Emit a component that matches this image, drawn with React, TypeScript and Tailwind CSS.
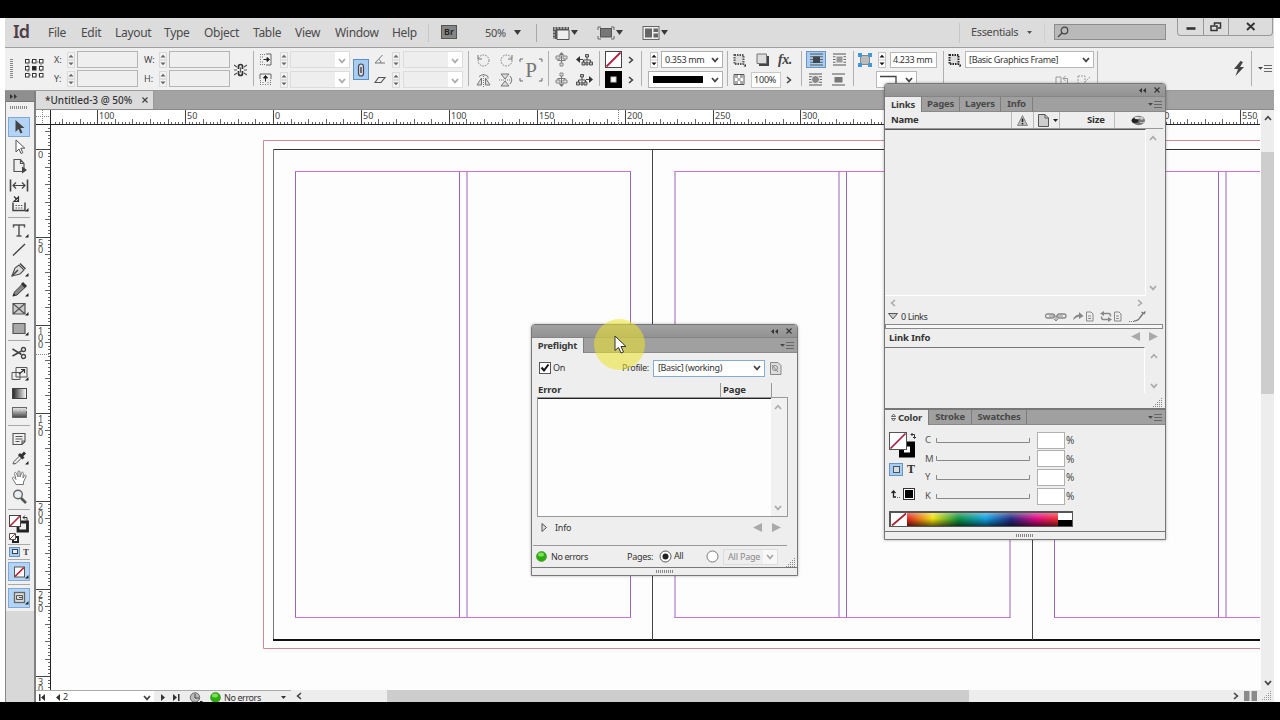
import React from 'react';

type Kids = { children?: React.ReactNode };

interface SvgProps {
  w: number;
  h: number;
  className?: string;
  children?: React.ReactNode;
}

const Svg = ({ w, h, className = '', children }: SvgProps) => (
  <svg width={w} height={h} viewBox={`0 0 ${w} ${h}`} fill="none" className={`block shrink-0 ${className}`}>
    {children}
  </svg>
);

/* ---------- small shared pieces ---------- */

const Chevron = ({ color = '#444' }: { color?: string }) => (
  <Svg w={8} h={6}><path d="M1 1l3 3.4L7 1" stroke={color} strokeWidth="1.7" /></Svg>
);

const ChevronUp = ({ color = '#aaa' }: { color?: string }) => (
  <Svg w={8} h={6}><path d="M1 5l3-3.4L7 5" stroke={color} strokeWidth="1.6" /></Svg>
);

const ChevronRight = ({ color = '#444' }: { color?: string }) => (
  <Svg w={6} h={8}><path d="M1 1l3.4 3L1 7" stroke={color} strokeWidth="1.6" /></Svg>
);

const ChevronLeft = ({ color = '#444' }: { color?: string }) => (
  <Svg w={6} h={8}><path d="M5 1L1.6 4 5 7" stroke={color} strokeWidth="1.6" /></Svg>
);

const Caret = () => <Svg w={7} h={5}><path d="M0 0h7L3.500 5z" fill="#3a3a3a" /></Svg>;

const Spinner = ({ dark = false }: { dark?: boolean }) => (
  <div className={`w-[8px] h-[16px] shrink-0 border ${dark ? 'bg-white border-[#c4c4c4]' : 'bg-[#f2f2f2] border-[#dadada]'}`}>
    <Svg w={6} h={14}>
      <path d="M0.500 4.500h5L3 1.800zM0.500 9.500h5L3 12.200z" fill={dark ? '#111' : '#666'} />
      <path d="M0 7h6" stroke="#ccc" />
    </Svg>
  </div>
);

const Sep = () => <div className="w-px h-[35px] mt-[3px] bg-[#b0b0b0] shrink-0" />;

// stacks the two rows of the control bar
const Pair = ({ w, children }: { w: string } & Kids) => (
  <div className={`flex flex-col gap-[3px] pt-[3px] shrink-0 ${w}`}>{children}</div>
);

const Row = ({ children, className = '' }: { className?: string } & Kids) => (
  <div className={`flex items-center h-[17px] ${className}`}>{children}</div>
);

const Field = () => <div className="w-[61px] h-[17px] border border-[#b5b5b5] bg-[#efefef]" />;

const DimSelect = () => (
  <div className="w-[60px] h-[17px] border border-[#dcdcdc] bg-[#eeeeee] flex justify-end">
    <div className="w-[14px] h-full bg-white flex items-center justify-center pt-[2px]"><Chevron color="#aaa" /></div>
  </div>
);

const NoneSwatch = ({ size }: { size: number }) => (
  <Svg w={size} h={size}>
    <rect x="0.500" y="0.500" width={size - 1} height={size - 1} fill="#fff" stroke="#444" />
    <path d={`M1.500 ${size - 1.5}L${size - 1.5} 1.500`} stroke="#b02040" strokeWidth="1.8" />
  </Svg>
);

const PanelMenu = () => (
  <Svg w={15} h={9}>
    <path d="M0 3h5L2.500 5.800z" fill="#444" />
    <path d="M6 1.500h8M6 4.500h8M6 7.500h8" stroke="#666" strokeWidth="1" />
  </Svg>
);

const GreenDot = () => (
  <Svg w={11} h={11}>
    <circle cx="5.500" cy="5.500" r="5" fill="#2cae0a" stroke="#4a8a3a" strokeWidth="0.600" />
    <ellipse cx="5" cy="3.500" rx="3" ry="2" fill="#7be05a" />
  </Svg>
);

/* ---------- menu bar ---------- */

const menus = [
  { name: 'File', w: 'w-[33px]' },
  { name: 'Edit', w: 'w-[34px]' },
  { name: 'Layout', w: 'w-[49px]' },
  { name: 'Type', w: 'w-[40px]' },
  { name: 'Object', w: 'w-[49px]' },
  { name: 'Table', w: 'w-[42px]' },
  { name: 'View', w: 'w-[40px]' },
  { name: 'Window', w: 'w-[57px]' },
  { name: 'Help', w: 'w-[36px]' },
];

const MenuBar = () => (
  <div className="h-[29px] bg-[#dcdcdc] flex items-center text-[#4a4a4a] shrink-0">
    <div className="w-[43px] pl-[8px] text-[18px] leading-[24px] font-semibold tracking-[-1px] text-[#503f4a] pb-[3px]">Id</div>
    <div className="flex text-[12px] leading-[16px] tracking-[-0.3px]">
      {menus.map((m) => <div key={m.name} className={m.w}>{m.name}</div>)}
    </div>
    <div className="w-px h-[18px] bg-[#c6c6c6]" />
    <div className="ml-[12px] w-[16px] h-[14px] mb-[2px] bg-[#858585] border border-[#555] text-[9px] leading-[12px] text-center font-semibold text-[#222]">Br</div>
    <div className="ml-[28px] w-[29px] text-[11px] leading-[14px] tracking-[-0.3px]">50%</div>
    <Caret />
    <div className="ml-[15px] w-px h-[18px] bg-[#a8a8a8]" />
    <div className="ml-[15px] flex items-center gap-[1px] w-[45px]">
      <Svg w={18} h={14}>
        <path d="M1 1h16v3H1zM1 4h4v9H1z" fill="#555" />
        <path d="M3 1v3M6 1v2M9 1v2M12 1v2M15 1v2M1 6h2M1 9h2M1 12h2" stroke="#ddd" />
        <path d="M5 4h12v9.500H5z" stroke="#555" fill="#eee" />
      </Svg>
      <Caret />
    </div>
    <div className="flex items-center gap-[1px] w-[45px]">
      <Svg w={18} h={14}>
        <rect x="3.500" y="2.500" width="11" height="8.500" fill="#777" stroke="#555" />
        <path d="M1 4V1h3M14 1h3v3M17 10v3h-3M4 13H1v-3" stroke="#666" />
      </Svg>
      <Caret />
    </div>
    <div className="flex items-center gap-[1px]">
      <Svg w={18} h={14}>
        <rect x="1" y="0.500" width="16" height="13" fill="#eee" stroke="#666" />
        <path d="M3 2.500h7v9H3zM11.500 2.500H16v3.500h-4.500zM11.500 7.500H16v4h-4.500z" fill="#666" />
      </Svg>
      <Caret />
    </div>
    <div className="flex-1" />
    <div className="w-px h-[20px] bg-[#c6c6c6]" />
    <div className="ml-[11px] w-[56px] text-[11px] leading-[14px] tracking-[-0.35px] pb-[2px]">Essentials</div>
    <Svg w={5} h={3}><path d="M0 0h5L2.500 3z" fill="#555" /></Svg>
    <div className="ml-[12px] w-px h-[20px] bg-[#d0d0d0]" />
    <div className="ml-[9px] mb-[2px] w-[112px] h-[16px] bg-[#b9b9b9] border border-[#8c8c8c] flex items-center pl-[2px]">
      <Svg w={12} h={12}>
        <circle cx="7.500" cy="4.500" r="3.300" stroke="#444" strokeWidth="1.200" />
        <path d="M5 7L1 11" stroke="#444" strokeWidth="1.300" />
      </Svg>
    </div>
    <div className="ml-[11px] flex self-start w-[96px] h-[18px] border border-t-0 border-[#999] rounded-b-[4px] mr-px">
      <div className="w-[26px] flex items-center justify-center border-r border-[#999]">
        <Svg w={10} h={8}><path d="M0.500 5.500h9" stroke="#333" strokeWidth="2.600" /></Svg>
      </div>
      <div className="w-[25px] flex items-center justify-center border-r border-[#999]">
        <Svg w={12} h={10}><path d="M4.500 3V1h6v5H8M1 4h6v4.500H1z" stroke="#333" strokeWidth="1.500" /></Svg>
      </div>
      <div className="flex-1 flex items-center justify-center">
        <Svg w={10} h={9}><path d="M1 1l7.500 7M8.500 1L1 8" stroke="#333" strokeWidth="1.900" /></Svg>
      </div>
    </div>
  </div>
);

/* ---------- control bar ---------- */

const ScaleIcon = ({ flip = false }: { flip?: boolean }) => (
  <Svg w={13} h={13}>
    <g transform={flip ? 'rotate(-90 6.5 6.5)' : ''}>
      <path d="M1 1.500h6M1 11.500h6M1 4h3M1 6.500h2M1 9h3" stroke="#777" strokeDasharray="1 1" />
      <path d="M7 1h5v11H7" stroke="#666" />
      <path d="M4.500 6.500h5M8 4.500l2.500 2L8 8.500z" stroke="#222" fill="#222" />
    </g>
  </Svg>
);

const TreeIcon = ({ up = false }: { up?: boolean }) => (
  <Svg w={13} h={15}>
    <g transform={up ? 'rotate(180 6.5 7.5)' : ''}>
      <path d="M6.500 15l-3-3.500h6z" fill="#777" />
      <path d="M6.500 11V2M3 6.500h7M3 6v3M10 6v3" stroke="#777" />
      <path d="M1 8h4v3H1zM8 8h4v3H8zM5 1h3v3H5z" stroke="#888" fill="#ddd" />
    </g>
  </Svg>
);

const SideTree = ({ right = false }: { right?: boolean }) => (
  <Svg w={17} h={13}>
    <g transform={right ? 'translate(17 0) scale(-1 1)' : ''}>
      <path d="M0 6.500l4-3.500v7z" fill="#333" />
      <path d="M4 6.500h3M11 3v4M7.500 10V7h7v3" stroke="#444" />
      <path d="M9.500 1.500h3v2.500h-3zM6 9h3v3H6zM10 9h2v3h-2zM13.500 9h3v3h-3z" stroke="#444" fill="#bbb" strokeWidth="0.900" />
    </g>
  </Svg>
);

const WrapIcon = ({ kind }: { kind: string }) => (
  <Svg w={13} h={13}>
    <path d="M0 1h13M0 12h13" stroke="#555" strokeWidth="1.100" />
    {kind !== 'jump' && <path d="M0 3.800h13M0 6.500h13M0 9.200h13" stroke="#666" strokeWidth="1.100" />}
    {kind === 'none' && <rect x="3" y="3.500" width="7" height="6.500" fill="#3e4650" />}
    {kind === 'box' && <rect x="3" y="3" width="7" height="7" fill="#999" stroke="#f0f0f0" />}
    {kind === 'shape' && <circle cx="6.500" cy="6.500" r="4" fill="#888" stroke="#f0f0f0" />}
    {kind === 'jump' && <rect x="2.500" y="4" width="8" height="5.500" fill="#777" />}
  </Svg>
);

const DashBox = ({ color = '#555' }: { color?: string }) => (
  <Svg w={13} h={14}>
    <rect x="1.500" y="2" width="9" height="9" stroke={color} strokeWidth="2" strokeDasharray="1.500 1" fill="#ddd" />
    <path d="M10.500 13.500h2.500V11z" fill="#222" />
  </Svg>
);

const ControlBar = () => (
  <div className="h-[43px] bg-[#f0f0f0] border-t border-[#a0a0a0] flex text-[9px] text-[#444] shrink-0">
    <div className="w-[20px] pl-[5px] pt-[11px] shrink-0">
      <Svg w={3} h={19}><path d="M1.500 0v19" stroke="#888" strokeWidth="3" strokeDasharray="1 1" /></Svg>
    </div>
    <div className="w-[29px] pt-[11px] shrink-0">
      <Svg w={19} h={19}>
        <path d="M3 3h13v13H3z" stroke="#666" strokeDasharray="1.500 1.500" />
        {[0.5, 7.5, 14.5].map((x) => [0.5, 7.5, 14.5].map((y) => (
          <rect key={`${x}-${y}`} x={x} y={y} width="3.500" height="3.500" fill={x === 7.5 && y === 7.5 ? '#222' : '#fff'} stroke="#333" />
        )))}
      </Svg>
    </div>
    <Pair w="w-[90px]">
      <Row><span className="w-[13px]">X:</span><Spinner /><i className="w-[2px]" /><Field /></Row>
      <Row className="mt-[-1px]"><span className="w-[13px]">Y:</span><Spinner /><i className="w-[2px]" /><Field /></Row>
    </Pair>
    <Pair w="w-[90px]">
      <Row><span className="w-[15px]">W:</span><Spinner /><i className="w-[2px]" /><Field /></Row>
      <Row className="mt-[-1px]"><span className="w-[15px]">H:</span><Spinner /><i className="w-[2px]" /><Field /></Row>
    </Pair>
    <div className="w-[19px] pt-[15px] shrink-0">
      <Svg w={13} h={14}>
        <path d="M4.500 6V3.500a2 2 0 014 0V6M4.500 8v2.500a2 2 0 004 0V8" stroke="#333" strokeWidth="1.700" />
        <path d="M6.500 4.500v5" stroke="#555" strokeWidth="1.200" />
        <path d="M0 2l3 2M0 7h3M0 12l3-2M13 2l-3 2M13 7h-3M13 12l-3-2" stroke="#555" strokeWidth="1.200" />
      </Svg>
    </div>
    <Sep />
    <Pair w="w-[99px] pl-[5px]">
      <Row><ScaleIcon /><i className="w-[8px]" /><Spinner /><i className="w-[2px]" /><DimSelect /></Row>
      <Row><ScaleIcon flip /><i className="w-[8px]" /><Spinner /><i className="w-[2px]" /><DimSelect /></Row>
    </Pair>
    <div className="w-[16px] h-[21px] mt-[11px] bg-[#a8cdf2] border border-[#5f8fc0] flex items-center justify-center shrink-0">
      <Svg w={8} h={14}>
        <rect x="1.500" y="1" width="5" height="12" rx="2.500" stroke="#445" strokeWidth="1.200" fill="#ddd" />
        <path d="M4 4v6" stroke="#334" strokeWidth="1.300" />
      </Svg>
    </div>
    <Pair w="w-[99px] pl-[5px]">
      <Row><Svg w={12} h={11}><path d="M8.500 1L1 9h10M5 5.500q2 1 2 3.500" stroke="#777" /></Svg><i className="w-[6px]" /><Spinner /><i className="w-[3px]" /><DimSelect /></Row>
      <Row><Svg w={12} h={11}><path d="M4.500 3.500H11L7 8.500H1z" stroke="#555" strokeWidth="1.200" /></Svg><i className="w-[6px]" /><Spinner /><i className="w-[3px]" /><DimSelect /></Row>
    </Pair>
    <Sep />
    <Pair w="w-[48px] pl-[7px]">
      <Row className="gap-[8px]">
        <Svg w={15} h={14}><circle cx="7.500" cy="7.500" r="5.500" stroke="#777" strokeDasharray="1.500 1.200" /><path d="M2 2v4h4" stroke="#777" /></Svg>
        <Svg w={15} h={14}><circle cx="7.500" cy="7.500" r="5.500" stroke="#777" strokeDasharray="1.500 1.200" /><path d="M13 2v4H9" stroke="#777" /></Svg>
      </Row>
      <Row className="gap-[8px]">
        <Svg w={15} h={14}><path d="M1 12L5.500 5v7zM14 12L9.500 5v7z" stroke="#777" fill="#ddd" /><path d="M7.500 1v13" stroke="#777" strokeDasharray="1 1" /><path d="M3 3.500q4.500-3.500 9 0v2" stroke="#777" /></Svg>
        <Svg w={15} h={14}><path d="M2 1h8L6 6zM2 13h8L6 8z" stroke="#777" fill="#ddd" /><path d="M0 7h12" stroke="#777" strokeDasharray="1 1" /><path d="M11 3q3.500 4 0 8" stroke="#777" /></Svg>
      </Row>
    </Pair>
    <div className="w-[31px] pl-[2px] pt-[10px] shrink-0">
      <div className="relative w-[24px] h-[24px] font-['Liberation_Serif',serif] text-[21px] leading-[24px] text-center text-[#777]">
        P
        <Svg w={24} h={24} className="absolute inset-0"><path d="M1 4V1h3M20 1h3v3M23 20v3h-3M4 23H1v-3" stroke="#666" /></Svg>
      </div>
    </div>
    <Sep />
    <Pair w="w-[50px] pl-[6px]">
      <Row className="gap-[8px]"><TreeIcon up /><SideTree /></Row>
      <Row className="gap-[8px]"><TreeIcon /><SideTree right /></Row>
    </Pair>
    <Sep />
    <Pair w="w-[41px] pl-[5px]">
      <Row className="gap-[6px]"><NoneSwatch size={17} /><ChevronRight /></Row>
      <Row className="gap-[6px]">
        <Svg w={17} h={17}><path d="M0 0h17v17H0z" fill="#000" /><rect x="6" y="6" width="5" height="5" fill="#fff" stroke="#ccc" /></Svg>
        <ChevronRight />
      </Row>
    </Pair>
    <Sep />
    <Pair w="w-[85px] pl-[6px]">
      <Row>
        <i className="w-[2px]" /><Spinner dark />
        <div className="ml-[3px] w-[62px] h-[17px] bg-white border border-[#b0b0b0] flex items-center justify-between pl-[3px] pr-[3px] text-[#333] tracking-[-0.35px] whitespace-nowrap">0.353 mm<Chevron /></div>
      </Row>
      <Row>
        <div className="w-[75px] h-[17px] bg-white border border-[#b0b0b0] flex items-center justify-between pl-[4px] pr-[3px]">
          <div className="w-[50px] h-[7px] bg-black" /><Chevron />
        </div>
      </Row>
    </Pair>
    <Sep />
    <Pair w="w-[73px] pl-[5px]">
      <Row>
        <DashBox />
        <Svg w={14} h={14} className="ml-[10px]"><path d="M3 3h10v10H3z" fill="#444" /><path d="M1 1h9.500v9.500H1z" fill="#ddd" stroke="#777" /></Svg>
        <span className="ml-[8px] font-['Liberation_Serif',serif] italic font-bold text-[14px] leading-[15px] tracking-[-0.5px]">fx.</span>
      </Row>
      <Row>
        <Svg w={12} h={13}><path d="M1 1.500h10v10H1z" stroke="#555" fill="#fff" /><path d="M2 2h3v3H2zM7 2h3v3H7zM4.500 5h3v3h-3zM2 8h3v3H2zM7 8h3v3H7z" fill="#aaa" /></Svg>
        <div className="ml-[6px] w-[30px] h-[16px] bg-white border border-[#c8c8c8] text-[#333] pl-[2px] leading-[14px] tracking-[-0.2px]">100%</div>
        <i className="w-[5px]" /><ChevronRight />
      </Row>
    </Pair>
    <Sep />
    <Pair w="w-[51px] pl-[4px]">
      <Row className="gap-[7px]">
        <div className="w-[20px] h-[17px] bg-[#a8cdf2] border border-[#6a95c2] flex items-center justify-center"><WrapIcon kind="none" /></div>
        <WrapIcon kind="box" />
      </Row>
      <Row className="gap-[10px] pl-[3px]"><WrapIcon kind="shape" /><WrapIcon kind="jump" /></Row>
    </Pair>
    <Sep />
    <Pair w="w-[89px] pl-[4px]">
      <Row>
        <Svg w={14} h={14}>
          <path d="M2.500 2.500h9v9h-9z" fill="#bbb" stroke="#888" />
          <path d="M0 0h4v4H0zM10 0h4v4h-4zM0 10h4v4H0zM10 10h4v4h-4z" fill="#3b9bd8" />
        </Svg>
        <i className="w-[6px]" /><Spinner dark />
        <div className="ml-[4px] w-[47px] h-[16px] bg-white border border-[#b8b8b8] pl-[2px] leading-[14px] text-[#333] tracking-[-0.35px] whitespace-nowrap">4.233 mm</div>
      </Row>
      <Row>
        <div className="ml-[18px] w-[41px] h-[17px] bg-white border border-[#b8b8b8] flex items-center justify-between pl-[3px] pr-[3px]">
          <Svg w={17} h={10}><path d="M0 1.500h16V10" stroke="#444" strokeWidth="1.300" /></Svg><Chevron />
        </div>
      </Row>
    </Pair>
    <Sep />
    <Pair w="w-[153px] pl-[4px]">
      <Row>
        <DashBox color="#222" />
        <div className="ml-[4px] w-[129px] h-[17px] bg-white border border-[#b8b8b8] flex items-center justify-between pl-[3px] pr-[3px] text-[#333] tracking-[-0.33px]">[Basic Graphics Frame]<Chevron /></div>
      </Row>
      <Row className="pl-[107px] gap-[8px]">
        <Svg w={14} h={12}><path d="M1 3h5v8H1zM8 4.500h4.500V9M10.500 2L8 4.500l2.500 2.500" stroke="#999" /></Svg>
        <Svg w={14} h={12}><path d="M1 2h7v9H1zM13 3L8 8" stroke="#999" strokeDasharray="2 1" /></Svg>
      </Row>
    </Pair>
    <Sep />
    <div className="flex-1" />
    <Svg w={12} h={15} className="mt-[13px]"><path d="M7.500 0L1 8h4l-2.500 7L11 6H7l3-5z" fill="#444" /></Svg>
    <div className="w-[6px]" />
    <Sep />
    <div className="w-[22px] pl-[6px] pt-[16px] shrink-0"><PanelMenu /></div>
  </div>
);

/* ---------- toolbox ---------- */

const Corner = () => <path d="M17 16.500h3.500V13z" fill="#222" />;

const Tool = ({ children, active = false, more = false }: { active?: boolean; more?: boolean } & Kids) => (
  <div className={`w-[22px] h-[19.6px] shrink-0 ${active ? 'bg-[#b3d4f5] outline outline-1 -outline-offset-1 outline-[#7fa9d6]' : ''}`}>
    <Svg w={22} h={19}>{children}{more && <Corner />}</Svg>
  </div>
);

const ToolSep = () => <div className="w-[22px] h-[5.9px] pt-[2px] shrink-0"><div className="h-px bg-[#a8a8a8]" /></div>;

const Toolbox = () => (
  <div className="w-[29px] bg-[#d8d8d8] border-l border-[#888] shrink-0 flex flex-col">
    <div className="h-[11px] bg-[#8f8f8f] border-b border-[#777] pl-[4px] pt-[3px] shrink-0">
      <Svg w={8} h={5}><path d="M0 0l3 2.500L0 5zM4 0l3 2.500L4 5z" fill="#333" /></Svg>
    </div>
    <div className="h-[509px] bg-[#f0f0f0] flex flex-col pl-[2px] shrink-0">
      <div className="h-[15px] pt-[4px] pl-[2px] shrink-0">
        <Svg w={18} h={3}><path d="M0 1.500h18" stroke="#888" strokeWidth="3" strokeDasharray="1 1" /></Svg>
      </div>
      <Tool active><path d="M7.500 3v12l3-3 2 4.500 2-1-2-4.500h4z" fill="#444" /></Tool>
      <Tool><path d="M8 3v12l3-3 2 4.500 1.800-.8-2-4.500h4z" stroke="#555" fill="#fff" /></Tool>
      <Tool><path d="M6 3.500h6.500l3.500 4V15.500H6zM12.500 3.500v4H16" stroke="#555" strokeWidth="1.200" fill="#eee" /><path d="M14 10.500v7l5-3.500z" fill="#444" /></Tool>
      <Tool><path d="M2.500 3.500v12M19.500 3.500v12" stroke="#444" strokeWidth="1.600" /><path d="M5 9.500h12M8 6.500l-3 3 3 3M14 6.500l3 3-3 3" stroke="#444" strokeWidth="1.200" /></Tool>
      <Tool more><path d="M5 7.500v8h12v-8" stroke="#444" strokeWidth="1.500" /><path d="M7.500 13h7M7.500 10.500h7" stroke="#555" strokeWidth="1.200" strokeDasharray="1.500 1.200" /><path d="M6 1.500l4 4M10.500 2v4.500H6z" stroke="#333" strokeWidth="1.200" /></Tool>
      <ToolSep />
      <Tool more><path d="M5.500 6.500V4h11v2.500M11 4v11M8.500 15h5" stroke="#555" strokeWidth="1.500" /></Tool>
      <Tool><path d="M5 15.500L17 4" stroke="#444" strokeWidth="1.400" /></Tool>
      <Tool more><path d="M4 16l3-8 4-3 5 5-4 4z" stroke="#555" fill="#ddd" strokeWidth="1.200" /><path d="M4 16l6-6M12 3.500l5.500 5.500" stroke="#444" strokeWidth="1.500" /></Tool>
      <Tool more><path d="M5 16l1.500-4L14 4.500l3 3L9 15z" stroke="#444" fill="#888" /><path d="M14 3l4 4" stroke="#333" strokeWidth="3" /><path d="M4.500 16.500l3-1.500-1.500-1.500z" fill="#222" /></Tool>
      <Tool more><path d="M5 4.500h12v10.500H5zM5 4.500L17 15M17 4.500L5 15" stroke="#555" strokeWidth="1.200" fill="#ccc" /></Tool>
      <Tool more><path d="M5 4.500h12v10H5z" stroke="#555" fill="#a8a8a8" strokeWidth="1.200" /></Tool>
      <ToolSep />
      <Tool><path d="M4.500 5l9 5.500M4.500 12l9-5" stroke="#444" strokeWidth="1.600" /><circle cx="15.500" cy="5.500" r="2" stroke="#444" strokeWidth="1.300" /><circle cx="15.500" cy="12.500" r="2" stroke="#444" strokeWidth="1.300" /></Tool>
      <Tool more><path d="M4 8.500h8v7H4zM8 3.500h11V13H8z" stroke="#555" /><path d="M11 10l5-4M13 5.500h3.500V9" stroke="#333" strokeWidth="1.200" /></Tool>
      <Tool>
        <defs><linearGradient id="grad"><stop stopColor="#222" /><stop offset="1" stopColor="#fff" /></linearGradient></defs>
        <rect x="4.500" y="4.500" width="14" height="10" fill="url(#grad)" stroke="#444" />
      </Tool>
      <Tool>
        <defs><linearGradient id="feather" x2="0" y2="1"><stop stopColor="#eee" /><stop offset="1" stopColor="#444" /></linearGradient></defs>
        <rect x="4.500" y="4.500" width="14" height="10" fill="url(#feather)" stroke="#666" />
        <path d="M5 7h14" stroke="#ccc" strokeDasharray="2 2" strokeWidth="2" />
      </Tool>
      <ToolSep />
      <Tool><path d="M5 4.500h12v8l-3 3H5zM7.500 7.500h7M7.500 10h7M7.500 12.500h4M17 12h-3v3.500" stroke="#555" strokeWidth="1.100" /></Tool>
      <Tool more><path d="M5 16l1-2.500 6-6 2 2-6 6z" stroke="#555" fill="#eee" /><path d="M11 6l4.500 4.500M13.500 8L17 4.500" stroke="#333" strokeWidth="3" /></Tool>
      <Tool><path d="M8 16.500L4.500 10.500c-.5-1.500 1-2 2-.5L8 11.500 6.500 5.500c0-1.500 1.500-1.500 2 0L10 9V4c0-1.500 2-1.500 2 0v5l1.500-4c.5-1.500 2-1 1.800.5L15 10l1.500-2.500c1-1 2 0 1.500 1L15.500 14v2.500z" stroke="#777" fill="#fff" /></Tool>
      <Tool><circle cx="10" cy="7.500" r="4.300" stroke="#666" strokeWidth="1.400" fill="#e8f0f2" /><path d="M13 11l5 5" stroke="#555" strokeWidth="2.600" /></Tool>
      <ToolSep />
      <Svg w={22} h={31}>
        <path d="M12 9h7.500v9H10v-5" stroke="#222" strokeWidth="2.800" fill="#eee" />
        <rect x="1.500" y="2.500" width="11" height="11" fill="#fff" stroke="#444" /><path d="M2 13L12 3" stroke="#b03040" strokeWidth="1.700" />
        <path d="M15 4.500h4v3.500M17 2.500l-2 2 2 2" stroke="#333" />
        <path d="M5 24h5v5H5z" fill="#fff" stroke="#222" strokeWidth="2" /><path d="M1.500 20.500h6v6h-6z" fill="#fff" stroke="#555" /><path d="M2 26l5-5" stroke="#b03040" />
      </Svg>
      <div className="w-[22px] h-px bg-[#a8a8a8] shrink-0" />
      <div className="w-[22px] h-[14px] flex items-center pl-px shrink-0">
        <div className="w-[11px] h-[10px] bg-[#a8cdf2] border border-[#6a95c2] flex items-center justify-center"><div className="w-[6px] h-[5px] bg-[#eee] border border-[#345]" /></div>
        <span className="ml-[3px] font-['Liberation_Serif',serif] text-[9px] leading-[10px] font-bold text-[#444]">T</span>
      </div>
      <div className="w-[22px] h-px bg-[#a8a8a8] shrink-0 mb-[2px]" />
      <Tool active more><rect x="6.500" y="5" width="10" height="10" fill="#fff" stroke="#555" /><path d="M7 14.500L16 5.500" stroke="#c02030" strokeWidth="1.700" /></Tool>
      <div className="w-[22px] h-px bg-[#a8a8a8] shrink-0 my-[3px]" />
      <Tool active more><rect x="6.500" y="4.500" width="10" height="10" fill="#ddd" stroke="#666" strokeWidth="1.300" /><path d="M8.500 7.500h6v4h-6zM11 9.500h3" stroke="#555" /></Tool>
    </div>
  </div>
);

/* ---------- rulers and page spread ---------- */

const PX_PER_MM = 1.758;

const HRuler = () => {
  const ticks = [];
  for (let mm = -124; mm <= 560; mm += 2) {
    const x = Math.round(222 + mm * PX_PER_MM) + 0.5;
    if (x < 1 || x > 1208) continue;
    const major = mm % 50 === 0;
    const h = major ? 15 : mm % 10 === 0 ? 6 : 3;
    ticks.push(<path key={mm} d={`M${x} ${15 - h}v${h}`} stroke={major ? '#444' : '#666'} />);
    if (major) ticks.push(<text key={`t${mm}`} x={x + 1.5} y="8.500" fontSize="9" fill="#444">{Math.abs(mm)}</text>);
  }
  return <Svg w={1209} h={15}>{ticks}<path d="M0 14.500h1209" stroke="#222" /><path d="M567.500 0v15" stroke="#888" strokeDasharray="1 1" /></Svg>;
};

const VRuler = () => {
  const ticks = [];
  for (let mm = -12; mm <= 306; mm += 2) {
    const y = Math.round(24 + mm * PX_PER_MM) + 0.5;
    if (y < 0 || y > 564) continue;
    const major = mm % 50 === 0;
    const w = major ? 15 : mm % 10 === 0 ? 6 : 3;
    ticks.push(<path key={mm} d={`M${15 - w} ${y}h${w}`} stroke={major ? '#444' : '#666'} />);
    if (major) {
      String(mm).split('').forEach((d, i) => {
        ticks.push(<text key={`${mm}-${i}`} x="2" y={y + 8 + i * 7} fontSize="9" fill="#444">{d}</text>);
      });
    }
  }
  return <Svg w={15} h={565}>{ticks}<path d="M14.500 0v565" stroke="#222" /><path d="M0 229.500h15" stroke="#888" strokeDasharray="1 1" /></Svg>;
};

const pageLefts = [222, 601.5, 981];

const Spread = () => (
  <Svg w={1209} h={565}>
    <path d="M1209 15.500H212.500V523.500H1209" stroke="#cc8a99" />
    <path d="M1209 24.500H222.500" stroke="#333" />
    <path d="M222.500 24v491" stroke="#777" />
    <path d="M222 515h987" stroke="#111" strokeWidth="2" />
    <path d="M601.500 24v491M981.500 24v491" stroke="#444" />
    {pageLefts.map((x) => (
      <g key={x}>
        <path d={`M${x + 22.5} 46v447M${x + 186.5} 46v447M${x + 194} 46v447M${x + 357.5} 46v447`} stroke="#9a63bd" />
        <path d={`M${x + 22} 46.500h336`} stroke="#cf72d4" />
        <path d={`M${x + 22} 492.500h336`} stroke="#cf72d4" />
      </g>
    ))}
  </Svg>
);

const StatusBar = () => (
  <div className="h-[12px] flex items-center bg-[#ededed] text-[9px] text-[#333] shrink-0">
    <div className="w-[118px] h-full bg-white flex items-center border-t border-[#aaa] pt-[2px] pl-[3px]">
      <Svg w={22} h={7}><path d="M0 0h1.500v7H0zM6 0v7L2 3.500zM21 0v7l-4-3.500z" fill="#333" /></Svg>
      <span className="ml-[2px] leading-[9px] mt-[-3px]">2</span>
      <i className="flex-1" /><Chevron /><i className="w-[3px]" />
    </div>
    <div className="w-[137px] h-full border-t border-[#aaa] flex items-center pt-[2px] pl-[7px]">
      <Svg w={19} h={7}><path d="M0 0v7l4-3.500zM12 0v7l4-3.500zM17 0h1.500v7H17z" fill="#333" /></Svg>
      <Svg w={14} h={11} className="ml-[9px]"><circle cx="6" cy="5.500" r="4.700" fill="#bbb" stroke="#666" /><path d="M6 2v4h4" stroke="#444" /><path d="M11 9h2.500v2H11z" fill="#222" /></Svg>
      <i className="w-[7px]" /><GreenDot />
      <span className="ml-[3px] leading-[9px] tracking-[-0.4px] whitespace-nowrap">No errors</span>
      <i className="flex-1" /><Svg w={5} h={3}><path d="M0 0h5L2.500 3z" fill="#333" /></Svg><i className="w-[5px]" />
    </div>
    <i className="w-[5px]" /><ChevronLeft />
    <div className="ml-[85px] w-[582px] h-full bg-[#cdcdcd]" />
    <i className="flex-1" />
    <ChevronRight />
    <Svg w={14} h={10} className="ml-[5px]"><path d="M0 0h5.500v10H0zM7.500 0H13v10H7.500z" fill="#8a8a8a" /></Svg>
    <Svg w={11} h={10} className="ml-[3px] mr-[2px]"><path d="M9.500 0v10M7.500 2v8M5.500 4v6M3.500 6v4M1.500 8v2" stroke="#999" strokeDasharray="1 1" /></Svg>
  </div>
);

const Document = () => (
  <div className="w-[1238px] flex flex-col shrink-0">
    <div className="h-[19px] bg-[#a3a3a3] border-b border-[#8a8a8a] flex shrink-0">
      <div className="w-[118px] bg-[#dcdcdc] border-r border-[#999] flex items-center pl-[9px] text-[10px] font-medium text-[#333]">
        <span className="w-[97px] whitespace-nowrap">*Untitled-3 @ 50%</span>
        <Svg w={6} h={6}><path d="M0.500 0.500l5 5M5.500 0.500l-5 5" stroke="#444" strokeWidth="1.200" /></Svg>
      </div>
    </div>
    <div className="flex flex-1">
      <div className="w-[1225px]">
        <div className="flex bg-white">
          <Svg w={15} h={15}><path d="M6.500 0v15M0 6.500h15" stroke="#888" strokeDasharray="1 1" /><path d="M14.500 0v15M0 14.500h15" stroke="#222" /></Svg>
          <HRuler />
        </div>
        <div className="flex bg-[#fdfdfd]"><VRuler /><Spread /></div>
      </div>
      <div className="w-[13px] bg-[#ededed] flex flex-col items-center pt-[5px]">
        <ChevronUp color="#444" />
        <div className="mt-[31px] w-full h-[242px] bg-[#cdcdcd]" />
        <i className="flex-1" />
        <Chevron /><i className="h-[4px]" />
      </div>
    </div>
    <StatusBar />
  </div>
);

/* ---------- floating panels ---------- */

const PanelTitle = () => (
  <div className="h-[13px] shrink-0 bg-linear-to-b from-[#a2a2a2] to-[#929292] border-b border-[#858585] rounded-t-[3px] flex items-center justify-end pr-[5px]">
    <Svg w={7} h={5}><path d="M3 0v5L0 2.500zM7 0v5L4 2.500z" fill="#333" /></Svg>
    <Svg w={6} h={6} className="ml-[8px]"><path d="M0.500 0.500l5 5M5.500 0.500l-5 5" stroke="#333" strokeWidth="1.100" /></Svg>
  </div>
);

interface Tab { label: string; w: string; }

const TabRow = ({ tabs, icon = false }: { tabs: Tab[]; icon?: boolean }) => (
  <div className="h-[15px] bg-[#a0a0a0] flex text-[9.500px] leading-[14px] font-bold tracking-[-0.2px] shrink-0">
    {tabs.map((t, i) => (
      <div key={t.label} className={`${t.w} flex items-center justify-center gap-[2px] border-r border-[#7d7d7d] ${i === 0 ? 'bg-[#ededed] text-[#3a3a3a]' : 'text-[#484848] border-b border-b-[#8a8a8a]'}`}>
        {icon && i === 0 && <Svg w={5} h={9}><path d="M0.500 3.500l2-2.500 2 2.500zM0.500 5.500l2 2.500 2-2.500z" stroke="#444" strokeWidth="0.800" /></Svg>}
        {t.label}
      </div>
    ))}
    <div className="flex-1 flex items-center justify-end pr-[2px] border-b border-[#8a8a8a]"><PanelMenu /></div>
  </div>
);

const PanelGrip = () => (
  <div className="h-[8px] shrink-0 border-t border-[#777] flex items-center justify-center">
    <Svg w={18} h={3}><path d="M0 1.500h18" stroke="#888" strokeWidth="3" strokeDasharray="1 1" /></Svg>
  </div>
);

const PrevNext = () => (
  <Svg w={28} h={9}><path d="M9 0v9L0 4.500zM19 0v9l9-4.500z" fill="#aaa" /></Svg>
);

const ResizeDots = () => (
  <Svg w={10} h={9}><path d="M8.500 0v9M6.500 2v7M4.500 4v5M2.500 6v3M0.500 8v1" stroke="#888" strokeDasharray="1 1" /></Svg>
);

const Slider = ({ name }: { name: string }) => (
  <div className="flex items-center h-[18.600px]">
    <span className="w-[11px] text-[9.500px] leading-[14px] text-[#555]">{name}</span>
    <Svg w={94} h={7}><path d="M0.500 1v4.500h93V1" stroke="#888" /></Svg>
    <div className="ml-[7px] w-[28px] h-[17px] bg-white border border-[#b0b0b0]" />
    <span className="ml-[1px] text-[10px] leading-[14px] text-[#444]">%</span>
  </div>
);

const LinksPanel = () => (
  <div className="absolute left-[884px] top-[83px] w-[282px] h-[457px] bg-[#eeeeee] border border-[#777] rounded-t-[4px] shadow-[0_0_3px_rgba(0,0,0,0.35)] text-[9px] text-[#333] flex flex-col">
    <PanelTitle />
    <TabRow tabs={[{ label: 'Links', w: 'w-[37px]' }, { label: 'Pages', w: 'w-[38px]' }, { label: 'Layers', w: 'w-[41px]' }, { label: 'Info', w: 'w-[32px]' }]} />
    <div className="h-[17px] shrink-0 w-[278px] flex items-center border-b border-[#999] font-bold text-[9.500px] tracking-[-0.2px]">
      <span className="w-[126px] pl-[6px]">Name</span>
      <div className="w-[22px] h-full border-l border-[#bbb] flex items-center justify-center">
        <Svg w={11} h={11}><path d="M5.500 0.500L10.500 10.500H0.500z" fill="#bbb" stroke="#888" /><path d="M5.500 3.500v3.500M5.500 8v1.500" stroke="#222" strokeWidth="1.500" /></Svg>
      </div>
      <div className="w-[27px] h-full border-x border-[#bbb] flex items-center gap-[4px] pl-[4px]">
        <Svg w={11} h={13}><path d="M0.500 0.500H7l3.500 3.500v8.500h-10zM7 0.500v3.500h3.500" fill="#ccc" stroke="#555" /></Svg>
        <Svg w={5} h={3}><path d="M0 0h5L2.500 3z" fill="#222" /></Svg>
      </div>
      <span className="w-[54px] pl-[27px]">Size</span>
      <div className="flex-1 h-full border-l border-[#bbb] flex items-center pl-[16px]">
        <Svg w={15} h={11}>
          <ellipse cx="7.500" cy="5.500" rx="6.500" ry="4.700" fill="#777" />
          <path d="M8 2.500q3-1.500 4.500 1-2 2.500-4.500-1zM9 7.500h4" fill="#ccc" stroke="#ccc" strokeWidth="0.800" />
          <ellipse cx="4" cy="5.500" rx="3.500" ry="2.500" fill="#222" />
          <ellipse cx="6" cy="3" rx="2.500" ry="1.200" fill="#ddd" />
        </Svg>
      </div>
    </div>
    <div className="h-[167px] flex shrink-0">
      <div className="w-[261px] border-t border-t-[#555] border-r border-b border-white" />
      <div className="flex-1 flex flex-col items-center justify-between pr-[6px] pt-[6px] pb-[5px]"><ChevronUp /><Chevron color="#aaa" /></div>
    </div>
    <div className="h-[13px] shrink-0 flex items-center justify-between pl-[5px] pr-[22px]"><ChevronLeft color="#aaa" /><ChevronRight color="#aaa" /></div>
    <div className="h-[14px] shrink-0 flex items-center pl-[3px] pt-px tracking-[-0.4px]">
      <Svg w={10} h={7}><path d="M0.500 0.500h9L5 6z" fill="#ccc" stroke="#555" /></Svg>
      <span className="ml-[3px] w-[144px]">0 Links</span>
      <Svg w={22} h={9}><rect x="0.500" y="2" width="9" height="4" rx="2" stroke="#888" strokeWidth="1.300" /><rect x="12" y="2" width="9" height="4" rx="2" stroke="#888" strokeWidth="1.300" /><path d="M4 4h14M11 5v4M9 7l2 2 2-2" stroke="#888" /></Svg>
      <Svg w={22} h={11} className="ml-[5px]"><path d="M1 9q1-5 6-5.500V1l4.500 4L7 8V5.500Q4 6 1 9z" fill="#888" /><path d="M14.500 1H19l2 2v7h-6.500zM16 5h3M16 7.500h3" stroke="#888" /></Svg>
      <Svg w={22} h={11} className="ml-[6px]"><path d="M3 2.500h6q1.500 0 1.500 3M8 8.500H3Q1.500 8.500 1.500 5.500" stroke="#888" strokeWidth="1.500" /><path d="M4 0v5L0 2.500zM8 6v5l4-2.500z" fill="#888" /><path d="M14.500 1H19l2 2v7h-6.500zM16 5h3M16 7.500h3" stroke="#888" /></Svg>
      <Svg w={17} h={11} className="ml-[7px]"><path d="M0 10.500h6" stroke="#777" strokeDasharray="1 1" /><path d="M5 10q4 0 6-3.500L14.500 2M12.500 1l3.500 2M16.500 0.500l-1.500 1.500" stroke="#777" strokeWidth="1.400" /></Svg>
    </div>
    <div className="h-[5px] w-[278px] mt-px border border-[#888] bg-[#f8f8f8] shrink-0" />
    <div className="h-[18px] shrink-0 flex items-center justify-between pl-[4px] pr-[7px] font-bold text-[9.500px] tracking-[-0.1px]">
      Link Info
      <Svg w={27} h={9} className="mb-[3px]"><path d="M9 0v9L0 4.500zM18 0v9l9-4.500z" fill="#aaa" /></Svg>
    </div>
    <div className="flex flex-1">
      <div className="w-[264px] h-[46px] border-t border-t-[#777] border-r border-white" />
      <div className="flex-1 flex flex-col items-center pt-[6px] pr-[2px]">
        <ChevronUp /><i className="h-[24px]" /><Chevron color="#aaa" /><i className="h-[9px]" />
        <div className="ml-[8px]"><ResizeDots /></div>
      </div>
    </div>
    <div className="h-[2px] bg-[#777] shrink-0" />
    <TabRow icon tabs={[{ label: 'Color', w: 'w-[44px]' }, { label: 'Stroke', w: 'w-[43px]' }, { label: 'Swatches', w: 'w-[55px]' }]} />
    <div className="h-[106px] shrink-0 pl-[4px] pt-[5px]">
      <div className="flex h-[81px]">
        <div className="w-[36px] pt-[2px]">
          <Svg w={28} h={28}>
            <path d="M12.500 12h11v11h-11z" stroke="#000" strokeWidth="5" fill="#fff" />
            <rect x="0.500" y="0.500" width="17" height="17" fill="#fff" stroke="#555" /><path d="M1.500 16.500l15-15" stroke="#a82045" strokeWidth="1.700" />
            <path d="M22 2.500h3.500V6M23.500 1L22 2.500 23.500 4M24 5l1.500 1.500L27 5" stroke="#333" />
          </Svg>
          <div className="flex items-center h-[15px] mt-[2px]">
            <div className="w-[14px] h-[13px] bg-[#a8cdf2] border border-[#6a95c2] flex items-center justify-center"><div className="w-[7px] h-[7px] bg-[#ddd] border border-[#456]" /></div>
            <span className="ml-[4px] font-['Liberation_Serif',serif] font-bold text-[12px] leading-[13px]">T</span>
          </div>
          <div className="flex items-center mt-[11px] pl-[2px]">
            <Svg w={9} h={9}><path d="M2.500 1v6H5M0.500 3l2-2 2 2" stroke="#222" strokeWidth="1.300" /><path d="M6 7.500h3" stroke="#666" strokeDasharray="1 1" /></Svg>
            <Svg w={12} h={12} className="ml-[3px]"><rect x="0.500" y="0.500" width="11" height="11" fill="#fff" stroke="#333" /><path d="M2 2h8v8H2z" fill="#000" /></Svg>
          </div>
        </div>
        <div className="pt-px">{['C', 'M', 'Y', 'K'].map((c) => <Slider key={c} name={c} />)}</div>
      </div>
      <div className="w-[184px] h-[16px] border-2 border-[#555] border-r border-b flex bg-white">
        <Svg w={16} h={13}><path d="M1 12.500L15 0.500" stroke="#a82030" strokeWidth="1.800" /></Svg>
        <div className="flex-1 bg-[linear-gradient(to_bottom,rgba(255,255,255,0.35),rgba(255,255,255,0)_45%,rgba(0,0,0,0.6)),linear-gradient(to_right,#e02020,#f0e010_17%,#109040_34%,#10a0e0_52%,#282880_69%,#e00a80_86%,#f03030)]" />
        <div className="w-[14px] flex flex-col"><i className="flex-1 bg-white" /><i className="h-[6px] bg-black" /></div>
      </div>
    </div>
    <PanelGrip />
  </div>
);

const PreflightPanel = () => (
  <div className="absolute left-[531px] top-[324px] w-[267px] h-[252px] bg-[#eeeeee] border border-[#777] rounded-t-[4px] shadow-[0_0_3px_rgba(0,0,0,0.3)] text-[9px] text-[#333] flex flex-col">
    <PanelTitle />
    <TabRow tabs={[{ label: 'Preflight', w: 'w-[52px]' }]} />
    <div className="h-[28px] shrink-0 flex items-center pl-[7px] mt-px tracking-[-0.35px]">
      <Svg w={12} h={12}><rect x="0.500" y="0.500" width="11" height="11" fill="#fff" stroke="#555" /><path d="M2.500 5.500l2.500 3 4.500-6" stroke="#111" strokeWidth="2" /></Svg>
      <span className="ml-[2px] w-[69px]">On</span>
      <span className="w-[31px]">Profile:</span>
      <div className="w-[112px] h-[17px] bg-white border border-[#85abd0] flex items-center justify-between pl-[4px] pr-[3px]">[Basic] (working)<Chevron /></div>
      <Svg w={12} h={13} className="ml-[5px]"><path d="M0.500 0.500H8l3 3v9H0.500z" stroke="#888" fill="#ddd" /><circle cx="5" cy="6" r="2.500" stroke="#888" /><path d="M2 3l6 7" stroke="#888" /></Svg>
    </div>
    <div className="h-[14px] shrink-0 flex items-center font-bold text-[9.500px] tracking-[-0.1px] ml-[6px] mt-px w-[234px]">
      <span className="w-[182px]">Error</span>
      <span className="flex-1 border-x border-[#999] pl-[2px] leading-[14px]">Page</span>
    </div>
    <div className="ml-[5px] w-[251px] h-[120px] shrink-0 border border-[#999] bg-[#fdfdfd] flex">
      <div className="flex-1 border-t border-[#222]" />
      <div className="w-[16px] bg-[#f1f1f1] flex flex-col items-center justify-between pt-[6px] pr-[2px] pb-[5px]"><ChevronUp /><Chevron color="#aaa" /></div>
    </div>
    <div className="h-[21px] shrink-0 flex items-center pl-[9px] pr-[16px]">
      <Svg w={7} h={9}><path d="M1 0.500v8L5.500 4.500z" fill="#ddd" stroke="#555" /></Svg>
      <span className="ml-[7px] flex-1 tracking-[-0.2px]">Info</span>
      <PrevNext />
    </div>
    <div className="mt-[7px] ml-px mr-[10px] h-px shrink-0 bg-[#999]" />
    <div className="flex-1 flex items-center pl-[4px] tracking-[-0.4px] whitespace-nowrap">
      <GreenDot />
      <span className="ml-[4px] w-[76px]">No errors</span>
      <span className="w-[32px] tracking-[-0.3px]">Pages:</span>
      <Svg w={13} h={13}><circle cx="6.500" cy="6.500" r="5.500" fill="#fff" stroke="#555" /><circle cx="6.500" cy="6.500" r="3" fill="#222" /></Svg>
      <span className="ml-[2px] w-[32px] pb-px">All</span>
      <Svg w={13} h={13}><circle cx="6.500" cy="6.500" r="5.500" fill="#fff" stroke="#777" /></Svg>
      <div className="ml-[4px] w-[55px] h-[16px] border border-[#ddd] flex items-center justify-between pl-[4px] text-[#888] tracking-[-0.2px]">All Page<div className="w-[14px] h-full bg-[#f8f8f8] flex items-center justify-center"><Chevron color="#aaa" /></div></div>
      <div className="ml-[8px] mt-[11px]"><ResizeDots /></div>
    </div>
    <PanelGrip />
  </div>
);

const Pointer = () => (
  <div className="absolute left-[594px] top-[319px] w-[51px] h-[51px] rounded-full bg-[#ece32a]/55">
    <Svg w={14} h={20} className="ml-[20px] mt-[16px]"><path d="M1 1v14.500l3.500-3 2.500 5.500 2.500-1-2.500-5.500H12z" fill="#fff" stroke="#333" /></Svg>
  </div>
);

const App = () => (
  <div className="relative w-[1280px] h-[720px] overflow-hidden bg-white font-['Noto_Sans','Open_Sans',sans-serif] flex flex-col">
    <div className="h-[18px] bg-black shrink-0" />
    <div className="h-[684px] ml-[5px] w-[1269px] flex flex-col">
      <MenuBar />
      <ControlBar />
      <div className="flex h-[612px] border-t border-[#999]">
        <Toolbox />
        <div className="w-[2px] bg-[#808080]" />
        <Document />
      </div>
    </div>
    <div className="h-[18px] bg-black shrink-0" />
    <LinksPanel />
    <PreflightPanel />
    <Pointer />
  </div>
);

export default App;
